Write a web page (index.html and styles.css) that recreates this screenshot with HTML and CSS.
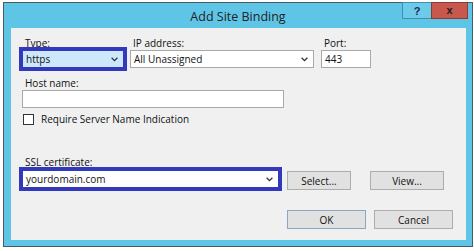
FILE: index.html
```html
<!DOCTYPE html>
<html>
<head>
<meta charset="utf-8">
<link rel="stylesheet" href="styles.css">
</head>
<body>
<div class="window">
  <div class="titlebar">
    <span class="title">Add Site Binding</span>
    <div class="controls">
      <span class="ctl help">?</span>
      <span class="ctl close">x</span>
    </div>
  </div>
  <div class="content">
    <div class="row1">
      <div class="field f-type">
        <span class="label">Type:</span>
        <div class="select hl type-sel"><span>https</span><svg class="chev" width="7" height="5" viewBox="0 0 7 5"><path d="M0.6 0.8 L3.5 3.7 L6.4 0.8" fill="none" stroke="#333" stroke-width="1.3"/></svg></div>
      </div>
      <div class="field f-ip">
        <span class="label">IP address:</span>
        <div class="select"><span>All Unassigned</span><svg class="chev" width="7" height="5" viewBox="0 0 7 5"><path d="M0.6 0.8 L3.5 3.7 L6.4 0.8" fill="none" stroke="#333" stroke-width="1.3"/></svg></div>
      </div>
      <div class="field f-port">
        <span class="label">Port:</span>
        <div class="input"><span>443</span></div>
      </div>
    </div>
    <div class="field f-host">
      <span class="label">Host name:</span>
      <div class="input"></div>
    </div>
    <div class="check-row">
      <span class="checkbox"></span>
      <span class="check-label">Require Server Name Indication</span>
    </div>
    <div class="field f-ssl">
      <span class="label">SSL certificate:</span>
      <div class="ssl-row">
        <div class="select hl ssl-sel"><span>yourdomain.com</span><svg class="chev" width="7" height="5" viewBox="0 0 7 5"><path d="M0.6 0.8 L3.5 3.7 L6.4 0.8" fill="none" stroke="#333" stroke-width="1.3"/></svg></div>
        <span class="btn b-select">Select...</span>
        <span class="btn b-view">View...</span>
      </div>
    </div>
    <div class="actions">
      <span class="btn b-ok">OK</span>
      <span class="btn b-cancel">Cancel</span>
    </div>
  </div>
</div>
</body>
</html>
```
FILE: styles.css
```css
* { box-sizing: border-box; }
html, body { margin: 0; background: #ffffff; }
body {
  padding: 2px 0 0 3px;
  font-family: "Open Sans", "Noto Sans", sans-serif;
  font-size: 10px;
  color: #111;
}
.window {
  width: 470px;
  height: 245px;
  border: 1px solid #4a5a62;
  background: #5fc5e7;
  display: flex;
  flex-direction: column;
  padding: 0 6px 6px 7px;
}
.titlebar {
  height: 25px;
  display: grid;
  grid-template-columns: 1fr auto 1fr;
  margin: 0 -6px 0 -7px;
}
.title {
  grid-column: 2;
  align-self: center;
  font-size: 12.5px;
  color: #222;
  padding-top: 1px;
}
.controls {
  grid-column: 3;
  justify-self: end;
  align-self: start;
  display: flex;
  margin-top: -1px;
  margin-right: 4px;
}
.ctl {
  height: 17px;
  display: flex;
  align-items: center;
  justify-content: center;
  font-weight: bold;
  font-family: "Liberation Sans", sans-serif;
}
.help {
  width: 29px;
  background: #6ccbe9;
  border: 1px solid #3f8fb0;
  border-right: none;
  color: #1a2a5a;
  font-size: 11px;
}
.close {
  width: 37px;
  background: #c8574d;
  border: 1px solid #8c3a34;
  color: #1e1e1e;
  font-size: 11px;
  padding-bottom: 1px;
}
.content {
  flex: 1;
  background: #f0f0f0;
  padding: 8px 0 0 11px;
  display: flex;
  flex-direction: column;
}
.field { display: flex; flex-direction: column; }
.label {
  height: 14px;
  line-height: 14px;
  padding-left: 3px;
}
.row1 { display: flex; }
.f-type { width: 102px; margin-right: 6px; }
.f-ip { width: 184px; margin-right: 7px; }
.f-port { width: 50px; }
.select, .input {
  height: 18px;
  background: #ffffff;
  border: 1px solid #a9a9a9;
  display: flex;
  align-items: center;
  padding: 0 5px 0 3px;
  justify-content: space-between;
}
.hl {
  outline: 3px solid #3339bd;
  border-color: #3339bd;
}
.type-sel { background: #cde8fb; }
.f-host { margin-top: 8px; }
.f-host .input { width: 262px; }
.check-row {
  margin-top: 4px;
  height: 14px;
  display: flex;
  align-items: center;
  padding-left: 1px;
}
.checkbox {
  width: 11px;
  height: 11px;
  border: 1px solid #333;
  background: #fff;
  margin-right: 7px;
}
.f-ssl { margin-top: 30px; }
.f-ssl .label { margin-top: -1px; }
.ssl-row { display: flex; align-items: flex-start; margin-top: 1px; }
.ssl-sel { width: 257px; }
.btn {
  height: 19px;
  background: #e1e1e1;
  border: 1px solid #adadad;
  display: flex;
  align-items: center;
  justify-content: center;
}
.b-select { width: 64px; margin-left: 8px; margin-top: 1px; }
.b-view { width: 74px; margin-left: 19px; margin-top: 1px; }
.actions {
  display: flex;
  justify-content: flex-end;
  gap: 8px;
  padding-right: 13px;
  margin-top: 20px;
}
.b-ok, .b-cancel { width: 79px; }
.b-ok { border-color: #8aa6c2; }
```
